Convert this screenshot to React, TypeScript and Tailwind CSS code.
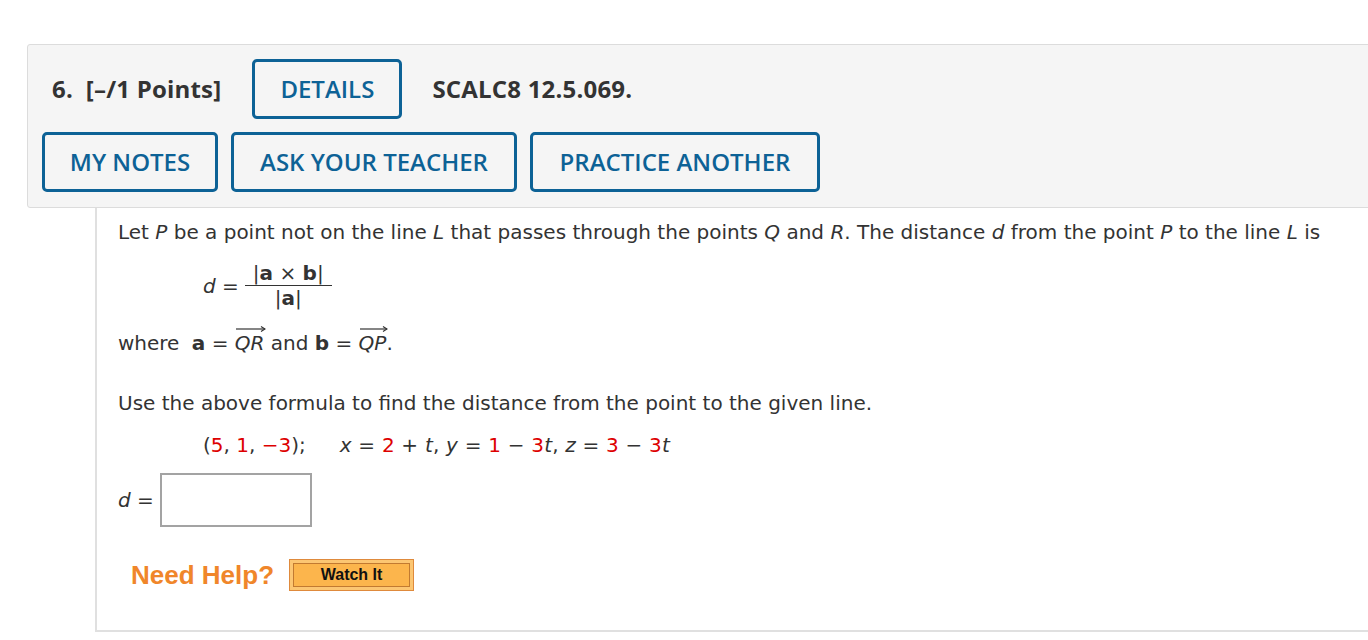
import React from "react";

function Btn({ children, className }: { children: React.ReactNode; className?: string }) {
  return (
    <div
      className={
        "h-[60px] border-[3px] border-[#0d6296] rounded-[5px] text-[#0d6296] text-[24px] font-semibold flex items-center justify-center " +
        (className ?? "")
      }
    >
      {children}
    </div>
  );
}

function Vec({ children, w }: { children: React.ReactNode; w: number }) {
  return (
    <span className="relative inline-block">
      <svg
        className="absolute left-0 -top-[6px]"
        width={w}
        height={8}
        viewBox={`0 0 ${w} 8`}
      >
        <line x1={1} y1={4} x2={w - 1} y2={4} stroke="#333" strokeWidth={1.2} />
        <polyline points={`${w - 5},1.5 ${w - 1},4 ${w - 5},6.5`} fill="none" stroke="#333" strokeWidth={1.2} />
      </svg>
      <i>{children}</i>
    </span>
  );
}

const R = ({ children }: { children: React.ReactNode }) => (
  <span className="text-[#dd0000]">{children}</span>
);

export default function App() {
  return (
    <div className="w-[1368px] h-[640px] overflow-hidden bg-white">
      <div className="pt-[44px] pl-[27px]">
        <div className="w-[1400px] bg-[#f5f5f5] border border-[#dcdcdc] rounded-[3px] px-[14px] pt-[14px] pb-[15px] font-['Open_Sans',sans-serif] text-[#333]">
          <div className="flex items-center h-[60px]">
            <span className="ml-[10px] text-[24px] font-bold whitespace-pre tracking-[0.2px]">6.  [–/1 Points]</span>
            <Btn className="ml-[31px] w-[150px]">DETAILS</Btn>
            <span className="ml-[30px] text-[24px] font-bold tracking-[0.2px]">SCALC8 12.5.069.</span>
          </div>
          <div className="mt-[13px] flex gap-[13px]">
            <Btn className="w-[176px]">MY NOTES</Btn>
            <Btn className="w-[286px]">ASK YOUR TEACHER</Btn>
            <Btn className="w-[290px]">PRACTICE ANOTHER</Btn>
          </div>
        </div>

        <div className="ml-[68px] w-[1400px] h-[424px] border-l-2 border-b-2 border-[#e0e0e0] pl-[21px] pt-[12px] font-['DejaVu_Sans',sans-serif] text-[20px] text-[#333] leading-[24px]">
          <div className="h-[24px]">
            Let <i>P</i> be a point not on the line <i>L</i> that passes through the points <i>Q</i> and <i>R</i>. The distance <i>d</i> from the point <i>P</i> to the line <i>L</i> is
          </div>

          <div className="mt-[17px] ml-[85px] flex items-center">
            <span>
              <i>d</i> ={" "}
            </span>
            <div className="ml-[6px] flex flex-col items-center">
              <div className="px-[8px] border-b border-[#333] h-[25px]">
                |<b>a</b> × <b>b</b>|
              </div>
              <div className="h-[24px]">
                |<b>a</b>|
              </div>
            </div>
          </div>

          <div className="mt-[21px] h-[24px]">
            where <b className="ml-[6px]">a</b> = <Vec w={31}>QR</Vec> and <b>b</b> = <Vec w={29}>QP</Vec>.
          </div>

          <div className="mt-[36px] h-[24px]">
            Use the above formula to find the distance from the point to the given line.
          </div>

          <div className="mt-[18px] h-[24px] ml-[85px] whitespace-pre">
            (<R>5</R>, <R>1</R>, <R>−3</R>);
            <span className="ml-[34px] tracking-[0.2px]">
              <i>x</i> = <R>2</R> + <i>t</i>, <i>y</i> = <R>1</R> − <R>3</R><i>t</i>, <i>z</i> = <R>3</R> − <R>3</R><i>t</i>
            </span>
          </div>

          <div className="mt-[16px] flex items-center">
            <span>
              <i>d</i> =
            </span>
            <div className="ml-[6px] w-[152px] h-[54px] border-2 border-[#a3a3a3] bg-white" />
          </div>

          <div className="mt-[32px] ml-[13px] flex items-center">
            <span className="font-['Liberation_Sans',sans-serif] font-bold text-[26px] text-[#f0862a] leading-[32px]">
              Need Help?
            </span>
            <div className="ml-[15px] w-[125px] h-[32px] border border-[#df8a3c] bg-[#fcc672] p-[3px]">
              <div className="w-full h-full border border-[#c27a30] bg-[#fcb54c] flex items-center justify-center font-['Liberation_Sans',sans-serif] font-bold text-[16px] text-[#111] leading-none">
                Watch It
              </div>
            </div>
          </div>
        </div>
      </div>
    </div>
  );
}
